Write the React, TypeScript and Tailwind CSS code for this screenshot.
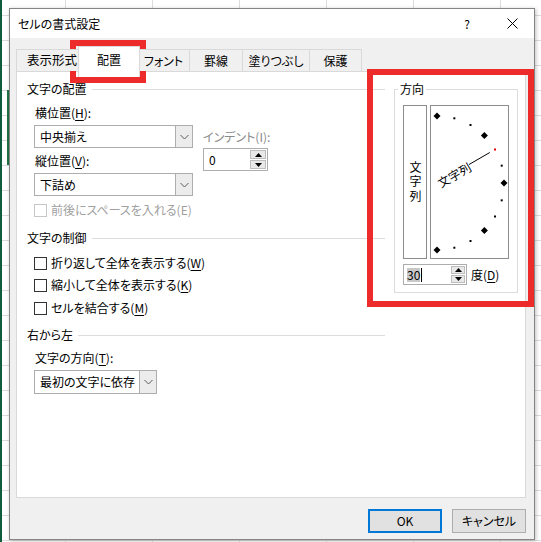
import React from "react";

function U({ children }: { children: React.ReactNode }) {
  return <span className="underline decoration-1 underline-offset-[2px]">{children}</span>;
}

function Chevron() {
  return (
    <svg width="9" height="6" viewBox="0 0 9 6">
      <path d="M0.5 1 L4.5 5 L8.5 1" fill="none" stroke="#5a5a5a" strokeWidth="1" />
    </svg>
  );
}

function Select({ text, wide }: { text: string; wide: boolean }) {
  return (
    <div
      className={
        wide
          ? "-ml-px flex h-[23px] w-[159px] border border-[#adadad] bg-white"
          : "-ml-px flex h-[24px] w-[123px] border border-[#adadad] bg-white"
      }
    >
      <div className="flex flex-1 items-center pl-[5px] leading-none">{text}</div>
      <div className="flex w-[17px] items-center justify-center border-l border-[#adadad] bg-[#ececec]">
        <Chevron />
      </div>
    </div>
  );
}

function SpinButtons({ w }: { w: string }) {
  return (
    <div className={w + " flex flex-col gap-px bg-white p-px"}>
      <div className="flex flex-1 items-center justify-center border border-[#bdbdbd] bg-[#e8e8e8]">
        <svg width="7" height="4" viewBox="0 0 7 4">
          <path d="M3.5 0 L7 4 L0 4 Z" fill="#000" />
        </svg>
      </div>
      <div className="flex flex-1 items-center justify-center border border-[#bdbdbd] bg-[#e8e8e8]">
        <svg width="7" height="4" viewBox="0 0 7 4">
          <path d="M0 0 L7 0 L3.5 4 Z" fill="#000" />
        </svg>
      </div>
    </div>
  );
}

function Header({ children, cls }: { children: React.ReactNode; cls: string }) {
  return (
    <div className={"flex h-[16px] items-center " + cls}>
      <span className="leading-[16px]">{children}</span>
      <div className="ml-[5px] h-px flex-1 bg-[#dcdcdc]" />
    </div>
  );
}

function Check({ children, cls, disabled }: { children: React.ReactNode; cls: string; disabled?: boolean }) {
  return (
    <div className={"flex h-[16px] items-center pl-[7px] " + cls}>
      <div
        className={
          disabled
            ? "h-[13px] w-[13px] border border-[#c6c6c6] bg-white"
            : "h-[13px] w-[13px] border border-[#333333] bg-white"
        }
      />
      <span className={disabled ? "ml-[4px] leading-[16px] text-[#a0a0a0]" : "ml-[4px] leading-[16px]"}>
        {children}
      </span>
    </div>
  );
}

function Dial() {
  const cx = 6;
  const cy = 77;
  const r = 67;
  const big = [90, 45, 0, -45, -90];
  const small = [75, 60, 15, -15, -30, -60, -75];
  const pt = (deg: number, rad: number) => {
    const a = (deg * Math.PI) / 180;
    return [cx + rad * Math.cos(a), cy - rad * Math.sin(a)];
  };
  const [l1x, l1y] = pt(30, 37);
  const [l2x, l2y] = pt(30, 61);
  const [rx, ry] = pt(30, r);
  return (
    <svg width="77" height="152" viewBox="0 0 77 152">
      {big.map((d) => {
        const [x, y] = pt(d, r);
        return (
          <polygon
            key={"b" + d}
            points={`${x},${y - 3.5} ${x + 3.5},${y} ${x},${y + 3.5} ${x - 3.5},${y}`}
            fill="#000"
          />
        );
      })}
      {small.map((d) => {
        const [x, y] = pt(d, r);
        return <rect key={"s" + d} x={x - 1} y={y - 1} width="2" height="2" fill="#000" />;
      })}
      <rect x={rx - 1} y={ry - 1} width="2" height="2" fill="#e00000" />
      <line x1={l1x} y1={l1y} x2={l2x} y2={l2y} stroke="#000" strokeWidth="1" />
      <text
        x={cx + 1}
        y={cy + 1}
        transform={`rotate(-30 ${cx} ${cy})`}
        dominantBaseline="central"
        fontSize="12"
        fontFamily="'Noto Sans CJK JP', sans-serif"
        fill="#000"
      >
        文字列
      </text>
    </svg>
  );
}

export default function App() {
  return (
    <div className="relative h-[542px] w-[541px] overflow-hidden bg-white bg-[linear-gradient(to_right,#dcdcdc_1px,transparent_1px),linear-gradient(to_bottom,#dcdcdc_1px,transparent_1px)] bg-size-[87px_25px] bg-position-[65px_15px] font-['Noto_Sans_CJK_JP',sans-serif] text-[12px] text-black [font-feature-settings:'palt']">
      {/* excel backdrop accents */}
      <div className="absolute left-0 top-0 h-[542px] w-[2px] bg-[#0f5c3c]" />
      <div className="absolute left-[7px] top-[90px] h-[75px] w-[2px] bg-[#217346]" />

      {/* dialog window */}
      <div className="absolute left-[9px] top-[8px] flex h-[532px] w-[526px] flex-col border border-[#858585] bg-[#f0f0f0] shadow-[1px_1px_4px_rgba(0,0,0,0.25)]">
        {/* title bar */}
        <div className="flex h-[29px] items-center bg-white">
          <div className="flex-1 pl-[8px]">セルの書式設定</div>
          <div className="flex h-full w-[46px] items-center justify-center text-[12px]">?</div>
          <div className="flex h-full w-[44px] items-center justify-center">
            <svg width="11" height="11" viewBox="0 0 11 11">
              <path d="M0.5 0.5 L10.5 10.5 M10.5 0.5 L0.5 10.5" stroke="#000" strokeWidth="1" />
            </svg>
          </div>
        </div>

        {/* body */}
        <div className="flex flex-1 flex-col pb-[6px] pt-[8px]">
          {/* tabs */}
          <div className="relative z-10 ml-[6px] flex h-[25px] items-end">
            <div className="flex h-[22px] w-[64px] items-center justify-start border-l border-r border-t border-[#d9d9d9] bg-[#f0f0f0] pl-[10px] text-[12.5px]">
              表示形式
            </div>
            <div className="relative z-10 -mx-[2px] -mb-[6px] flex h-[31px] w-[62px] items-start justify-center border-x border-t border-[#d9d9d9] bg-white pt-[4px]">
              配置
            </div>
            <div className="flex h-[22px] w-[52px] items-center justify-center border-r border-t border-[#d9d9d9] bg-[#f0f0f0]">
              フォント
            </div>
            <div className="flex h-[22px] w-[53px] items-center justify-center border-r border-t border-[#d9d9d9] bg-[#f0f0f0]">
              罫線
            </div>
            <div className="flex h-[22px] w-[67px] items-center justify-center border-r border-t border-[#d9d9d9] bg-[#f0f0f0]">
              塗りつぶし
            </div>
            <div className="flex h-[22px] w-[52px] items-center justify-center border-r border-t border-[#d9d9d9] bg-[#f0f0f0]">
              保護
            </div>
          </div>

          {/* panel */}
          <div className="ml-[6px] mr-[8px] flex h-[427px] border border-[#d9d9d9] bg-white">
            {/* left column */}
            <div className="flex w-[368px] flex-col pl-[10px] pt-[9px]">
              <Header cls="">文字の配置</Header>
              <div className="mt-[8px] pl-[8px] leading-[16px]">
                横位置(<U>H</U>):
              </div>
              <div className="mt-[4px] flex pl-[8px]">
                <div className="flex flex-col">
                  <Select text="中央揃え" wide={true} />
                  <div className="mt-[5px] leading-[16px]">
                    縦位置(<U>V</U>):
                  </div>
                  <div className="mt-[4px]">
                    <Select text="下詰め" wide={true} />
                  </div>
                </div>
                <div className="ml-[10px] flex flex-col">
                  <div className="mt-[4px] leading-[16px] text-[#8a8a8a]">インデント(I):</div>
                  <div className="mt-[3px] flex h-[23px] w-[65px] border border-[#adadad] bg-white">
                    <div className="flex flex-1 items-center pl-[5px] leading-none">0</div>
                    <SpinButtons w="w-[18px]" />
                  </div>
                </div>
              </div>
              <Check cls="mt-[6px]" disabled>
                前後にスペースを入れる(E)
              </Check>

              <Header cls="mt-[12px]">文字の制御</Header>
              <Check cls="mt-[9px]">
                折り返して全体を表示する(<U>W</U>)
              </Check>
              <Check cls="mt-[6px]">
                縮小して全体を表示する(<U>K</U>)
              </Check>
              <Check cls="mt-[7px]">
                セルを結合する(<U>M</U>)
              </Check>

              <Header cls="mt-[11px]">右から左</Header>
              <div className="mt-[7px] pl-[8px] leading-[16px]">
                文字の方向(<U>T</U>):
              </div>
              <div className="mt-[4px] pl-[8px]">
                <Select text="最初の文字に依存" wide={false} />
              </div>
            </div>

            {/* right column */}
            <div className="ml-[9px] pt-[9px]">
              <fieldset className="w-[124px] border border-[#dcdcdc]">
                <legend className="ml-[3px] px-[2px] leading-[16px]">方向</legend>
                <div className="px-[8px] pb-[7px] pt-[8px]">
                  <div className="flex gap-[3px]">
                    <div className="flex h-[154px] w-[24px] items-center justify-center border border-[#8c8c8c]">
                      <span className="pt-[2px] text-[12px] leading-[16px] tracking-[2.5px] [text-orientation:upright] [writing-mode:vertical-rl]">
                        文字列
                      </span>
                    </div>
                    <div className="h-[154px] w-[79px] border border-[#8c8c8c]">
                      <Dial />
                    </div>
                  </div>
                  <div className="mt-[5px] flex items-center">
                    <div className="flex h-[21px] w-[64px] border border-[#adadad] bg-white">
                      <div className="flex flex-1 items-center pl-[3px]">
                        <span className="bg-[#c8c8c8] leading-[14px]">30</span>
                        <span className="ml-px h-[14px] w-px bg-black" />
                      </div>
                      <SpinButtons w="w-[16px]" />
                    </div>
                    <span className="ml-[4px] leading-[16px]">
                      度(<U>D</U>)
                    </span>
                  </div>
                </div>
              </fieldset>
            </div>
          </div>

          {/* buttons */}
          <div className="mr-[8px] mt-[11px] flex justify-end gap-[10px]">
            <div className="flex h-[24px] w-[74px] items-center justify-center border-2 border-[#0078d7] bg-[#e1e1e1]">
              OK
            </div>
            <div className="flex h-[24px] w-[74px] items-center justify-center border border-[#adadad] bg-[#e1e1e1]">
              キャンセル
            </div>
          </div>
        </div>
      </div>

      {/* red annotation boxes */}
      <div className="absolute left-[70px] top-[40px] h-[43px] w-[76px] border-[6px] border-[#ee2b2b]" />
      <div className="absolute left-[367px] top-[69px] h-[238px] w-[167px] border-[6px] border-[#ee2b2b]" />
    </div>
  );
}
